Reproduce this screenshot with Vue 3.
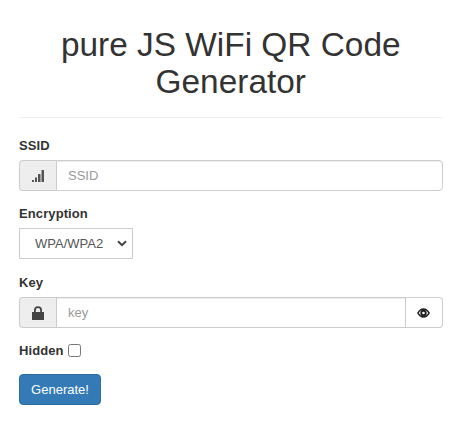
<script setup>
const title = 'pure JS WiFi QR Code Generator'
</script>

<template>
  <div class="page">
    <h1 class="title">{{ title }}</h1>
    <form class="form" @submit.prevent>
      <div class="group tight">
        <label class="label">SSID</label>
        <div class="input-group">
          <span class="addon addon-left">
            <svg width="14" height="14" viewBox="0 0 14 14" fill="#555">
              <rect x="1" y="11" width="2" height="2" />
              <rect x="4" y="8.500" width="2" height="4.500" />
              <rect x="7" y="5" width="2.500" height="8" />
              <rect x="10.500" y="1" width="2.500" height="12" />
            </svg>
          </span>
          <input class="control" placeholder="SSID" />
        </div>
      </div>
      <div class="group">
        <label class="label">Encryption</label>
        <div class="select">
          <span>WPA/WPA2</span>
          <svg width="10" height="7" viewBox="0 0 10 7" fill="none" stroke="#444" stroke-width="2">
            <path d="M1 1.200 5 5.200 9 1.200" />
          </svg>
        </div>
      </div>
      <div class="group tight">
        <label class="label">Key</label>
        <div class="input-group">
          <span class="addon addon-left">
            <svg width="14" height="14" viewBox="0 0 14 14" fill="#444">
              <path d="M1 6H3V4.200a4 4 0 0 1 8 0V6h2v8H1zM4.800 6h4.400V4.200a2.200 2.200 0 0 0-4.400 0z" fill-rule="evenodd" />
            </svg>
          </span>
          <input class="control" placeholder="key" />
          <span class="addon addon-right">
            <svg width="15" height="12" viewBox="0 0 14 12">
              <path d="M0.500 6C2.200 3 4.400 1.300 7 1.300S11.800 3 13.500 6C11.800 9 9.600 10.700 7 10.700S2.200 9 .5 6Z" fill="#222" />
              <path d="M2.300 6C3.500 4.200 4.700 3.200 5.700 2.800A3.600 3.600 0 0 0 5.700 9.200C4.700 8.800 3.500 7.800 2.300 6ZM11.700 6C10.500 4.200 9.300 3.200 8.300 2.800A3.600 3.600 0 0 1 8.300 9.200C9.300 8.800 10.500 7.800 11.700 6Z" fill="#fff" />
              <circle cx="7" cy="6" r="1.300" fill="#fff" />
            </svg>
          </span>
        </div>
      </div>
      <div class="hidden-row">
        <label class="label inline">Hidden</label>
        <input class="check" type="checkbox" />
      </div>
      <button class="btn" type="submit">Generate!</button>
    </form>
  </div>
</template>

<style scoped>
.page {
  box-sizing: border-box;
  width: 474px;
  height: 424px;
  padding: 27px 31.500px 0 19px;
  background: #fff;
  color: #333;
  font-family: "Liberation Sans", Arial, sans-serif;
  font-size: 14px;
  overflow: hidden;
}
.title {
  margin: 0 0 19px;
  padding-bottom: 16.600px;
  border-bottom: 1px solid #eee;
  font-size: 33.400px;
  font-weight: 400;
  line-height: 36.700px;
  text-align: center;
}
.form {
  display: flex;
  flex-direction: column;
}
.group {
  margin-bottom: 15px;
}
.group.tight {
  margin-bottom: 14px;
}
.label {
  display: block;
  margin-bottom: 6px;
  font-size: 13px;
  font-weight: 700;
  line-height: 17px;
  letter-spacing: 0.1px;
}
.label.inline {
  display: inline;
  margin: 0;
}
.input-group {
  display: flex;
  height: 31px;
}
.addon {
  flex: none;
  display: flex;
  align-items: center;
  justify-content: center;
  box-sizing: border-box;
  border: 1px solid #ccc;
}
.addon-left {
  width: 37px;
  border-right: 0;
  border-radius: 4px 0 0 4px;
  background: #eee;
}
.addon-right {
  order: 1;
  width: 37px;
  border-left: 0;
  border-radius: 0 4px 4px 0;
  background: #fff;
}
.control {
  flex: 1;
  min-width: 0;
  box-sizing: border-box;
  padding: 0 11px;
  border: 1px solid #ccc;
  border-radius: 0 4px 4px 0;
  box-shadow: inset 0 1px 1px rgba(0, 0, 0, 0.075);
  color: #555;
  font: inherit;
  font-size: 13px;
  outline: none;
}
.input-group:has(.addon-right) .control {
  border-radius: 0;
}
.control::placeholder {
  color: #999;
  opacity: 1;
}
.select {
  display: flex;
  align-items: center;
  justify-content: space-between;
  box-sizing: border-box;
  width: 114px;
  height: 31px;
  padding: 0 5px 0 15px;
  border: 1px solid #ccc;
  color: #555;
  font-size: 13px;
}
.hidden-row {
  display: flex;
  align-items: center;
  gap: 4px;
  height: 17px;
  margin: 0 0 15px;
}
.check {
  width: 13px;
  height: 13px;
  margin: 0;
}
.btn {
  align-self: flex-start;
  box-sizing: border-box;
  width: 82px;
  height: 31px;
  padding: 0;
  border: 1px solid #2e6da4;
  border-radius: 4px;
  background: #337ab7;
  color: #fff;
  font: inherit;
  font-size: 13px;
}
</style>
